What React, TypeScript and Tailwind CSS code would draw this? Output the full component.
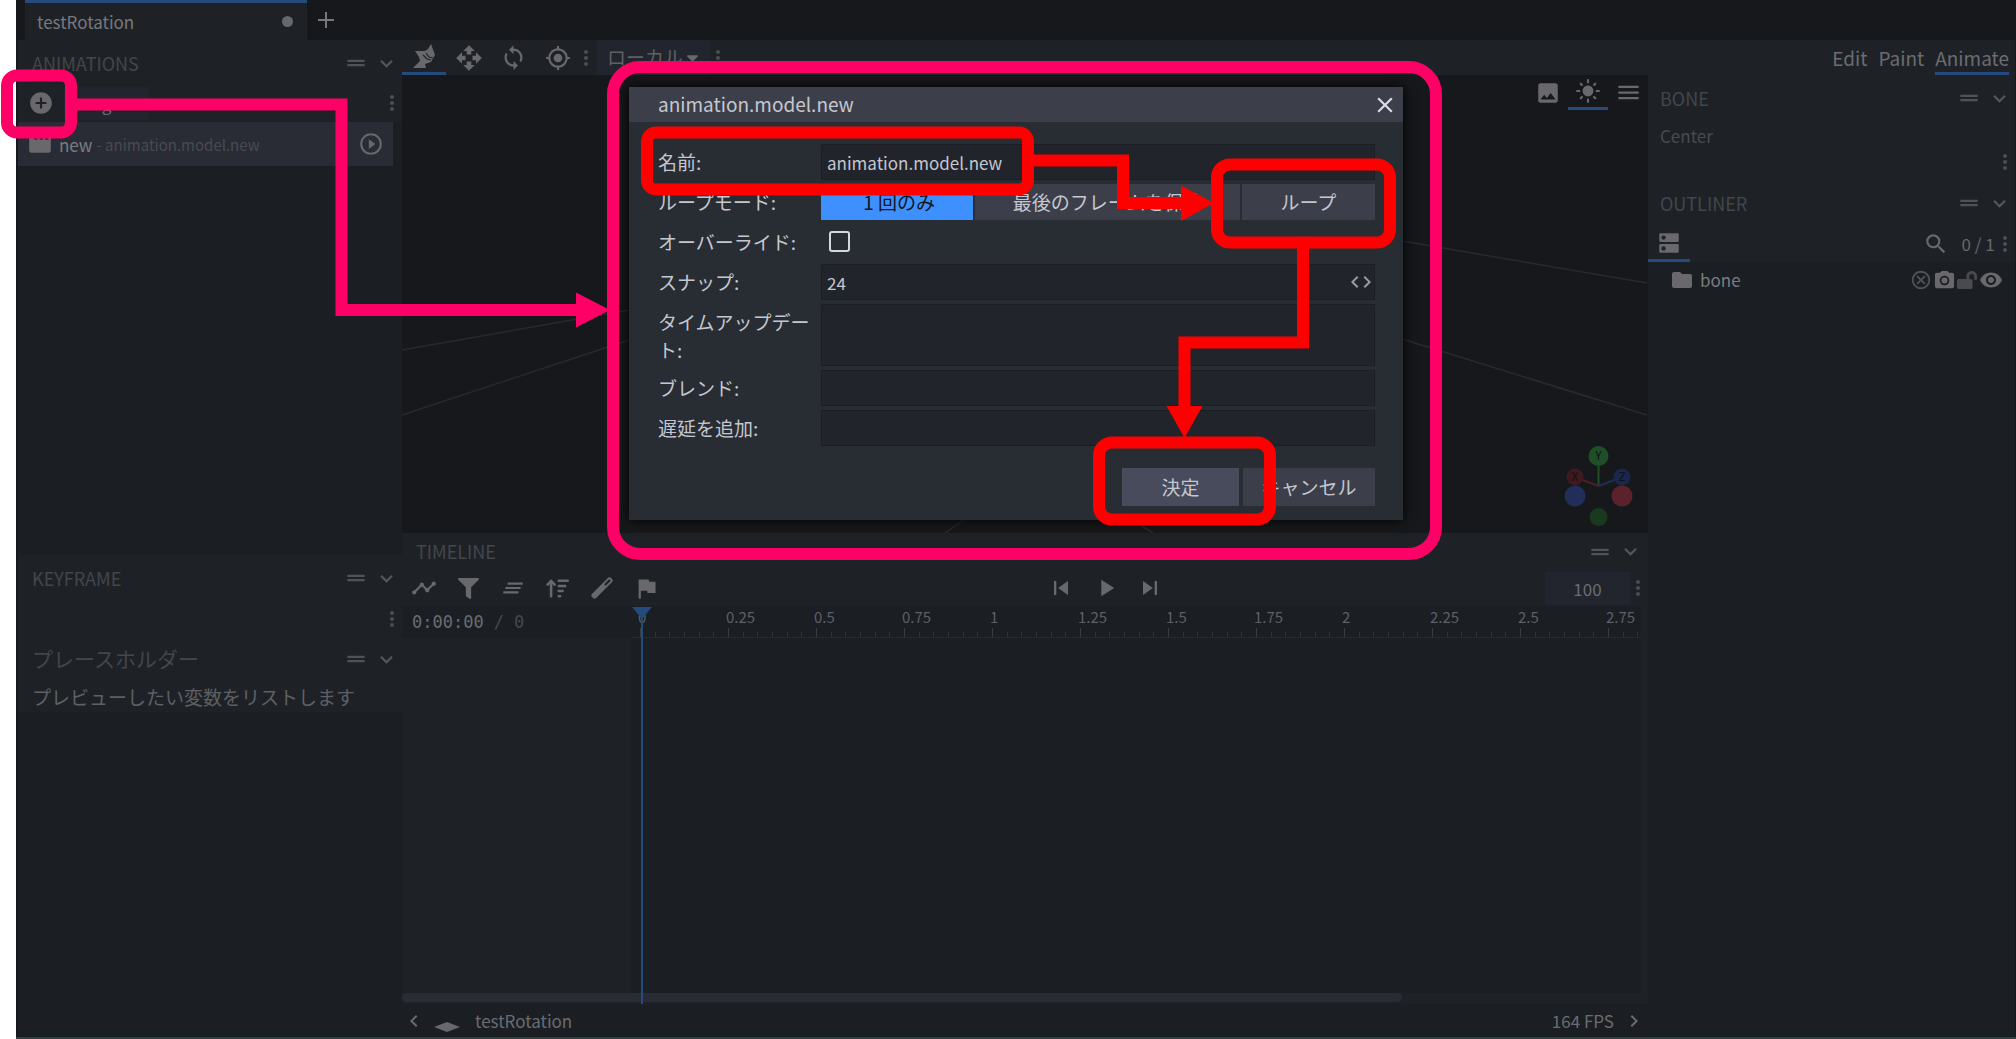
import type { ReactNode } from "react";
import {
  MdAddCircle,
  MdClearAll,
  MdClose,
  MdCode,
  MdDns,
  MdDragHandle,
  MdExpandMore,
  MdFlag,
  MdFolder,
  MdGpsFixed,
  MdImage,
  MdKeyboardArrowLeft,
  MdKeyboardArrowRight,
  MdLightMode,
  MdMenu,
  MdMoreVert,
  MdMovie,
  MdOpenWith,
  MdOutlineCancel,
  MdPhotoCamera,
  MdPlayArrow,
  MdPlayCircleOutline,
  MdSearch,
  MdSkipNext,
  MdSkipPrevious,
  MdSync,
  MdTimeline,
  MdVisibility,
} from "react-icons/md";
import { FaCaretDown, FaFilter, FaLockOpen } from "react-icons/fa";
import { FaArrowUpWideShort } from "react-icons/fa6";

const RULER = ["0", "0.25", "0.5", "0.75", "1", "1.25", "1.5", "1.75", "2", "2.25", "2.5", "2.75"];

function IconButton({ label, className = "", children }: { label: string; className?: string; children: ReactNode }) {
  return (
    <button type="button" aria-label={label} className={`flex items-center justify-center shrink-0 ${className}`}>
      {children}
    </button>
  );
}

function Dots({ className = "" }: { className?: string }) {
  return (
    <IconButton label="More" className={`w-3 text-[#4c4e53] ${className}`}>
      <MdMoreVert size={24} className="shrink-0" />
    </IconButton>
  );
}

function PanelHeader({ title, className }: { title: string; className: string }) {
  return (
    <header className={`flex items-center text-[#43464b] ${className}`}>
      <h2 className="flex-1">{title}</h2>
      <IconButton label="Move panel" className="w-8 text-[#505257]">
        <MdDragHandle size={26} />
      </IconButton>
      <IconButton label="Fold panel" className="w-7 text-[#55575c]">
        <MdExpandMore size={25} />
      </IconButton>
    </header>
  );
}

function GizmoIcon() {
  return (
    <svg width="22" height="24" viewBox="0 0 22 24" fill="currentColor">
      <path d="M18 0l4 11-4 7-6 2 1 4H0l7-7-1-4-4-6h10l3-2z" />
      <path d="m10 11 4 4 4 1M13 9l3 4 4 1" stroke="#1e2226" strokeWidth="1.2" fill="none" />
    </svg>
  );
}

function PenIcon() {
  return (
    <svg width="22" height="22" viewBox="0 0 22 22" fill="none" stroke="currentColor" strokeLinecap="round">
      <path d="M3.500 18.500 18.500 3.500" strokeWidth="6" />
      <path d="M14.500 7.500l4-4" stroke="#1e2226" strokeWidth="2" />
    </svg>
  );
}

function LeftSidebar() {
  return (
    <aside className="flex flex-col w-[384px] shrink-0 bg-[#1b1f23]">
      <section className="bg-[#1e2226]">
        <PanelHeader title="ANIMATIONS" className="h-[46px] pl-3.5 pr-0.5 text-[18px]" />
        <div className="flex items-center h-[34px] pr-1 mb-0.5">
          <IconButton label="Add animation" className="w-[46px] text-[#68686d]">
            <MdAddCircle size={26} />
          </IconButton>
          <input
            aria-label="Animation speed"
            defaultValue="g"
            className="w-[85px] h-[33px] bg-[#22252d] text-center text-[17px] text-[#6a6c72]"
          />
          <Dots className="ml-auto" />
        </div>
      </section>
      <div className="flex items-center h-11 mr-[9px] pl-[9px] bg-[#292c35] text-[#68686d]">
        <MdMovie size={26} className="shrink-0" />
        <span className="mt-0.5 ml-1.5 text-[17px] text-[#7b7c81]">new</span>
        <span className="mt-0.5 ml-1 flex-1 text-[15px] text-[#484b51]">- animation.model.new</span>
        <IconButton label="Play" className="w-11">
          <MdPlayCircleOutline size={26} />
        </IconButton>
      </div>
      <section className="mt-[389px] bg-[#1e2226]">
        <PanelHeader title="KEYFRAME" className="h-[46px] pl-3.5 pr-0.5 text-[18px]" />
        <div className="flex justify-end h-[36px] pr-1">
          <Dots />
        </div>
        <PanelHeader title="プレースホルダー" className="h-[44px] pl-3.5 pr-0.5 text-[21px]" />
        <p className="pl-3.5 pt-[3px] pb-0.5 text-[19px] leading-[26px] text-[#5e6065]">
          プレビューしたい変数をリストします
        </p>
      </section>
    </aside>
  );
}

function Viewport() {
  return (
    <div className="relative h-[458px] shrink-0 overflow-hidden bg-[#17181b]">
      <svg className="absolute inset-0" width="1246" height="458" fill="none" stroke="#292a2e" strokeWidth="1.5">
        <path d="M0 275 227 235M0 340 227 265M1000 166l245 42M1000 264l245 76M543 458l20-14M735 448l16 10" />
      </svg>
      <div className="relative flex justify-end text-[#68686d]">
        <IconButton label="Background" className="w-10 h-[35px]">
          <MdImage size={26} />
        </IconButton>
        <IconButton label="Shading" className="w-10 h-[35px] border-b-3 border-[#254a7c]">
          <MdLightMode size={26} />
        </IconButton>
        <IconButton label="Menu" className="w-10 h-[35px]">
          <MdMenu size={27} />
        </IconButton>
      </div>
      <svg className="absolute right-3.5 bottom-0" width="70" height="88" viewBox="0 0 70 88">
        <g strokeWidth="2">
          <path d="M34.500 41V11" stroke="#1f4f26" />
          <path d="M34.500 41 11 32" stroke="#4c2026" />
          <path d="M34.500 41 58 32" stroke="#1f2f54" />
        </g>
        <circle cx="34.500" cy="11" r="10" fill="#1f4f26" />
        <circle cx="11" cy="32" r="8.500" fill="#40191f" />
        <circle cx="58" cy="32" r="8.500" fill="#1a264b" />
        <circle cx="11" cy="51" r="10.500" fill="#202e59" />
        <circle cx="58" cy="51" r="10.500" fill="#5b222b" />
        <circle cx="34.500" cy="72" r="9" fill="#1a3a20" />
        <g fill="#101215" fontSize="12" textAnchor="middle">
          <text x="34.500" y="15">Y</text>
          <text x="11" y="36">X</text>
          <text x="58" y="36">Z</text>
        </g>
      </svg>
    </div>
  );
}

function Timeline() {
  return (
    <section className="flex flex-col flex-1 bg-[#1e2226]">
      <PanelHeader title="TIMELINE" className="h-[37px] pl-3.5 pr-1 text-[18px]" />
      <div className="flex items-center h-[36px] text-[#68686d]">
        <div className="flex flex-4">
          <IconButton label="Graph editor" className="w-11">
            <MdTimeline size={26} />
          </IconButton>
          <IconButton label="Filter" className="w-[45px]">
            <FaFilter size={21} />
          </IconButton>
          <IconButton label="Clear" className="w-11">
            <MdClearAll size={26} />
          </IconButton>
          <IconButton label="Sort" className="w-[45px]">
            <FaArrowUpWideShort size={23} />
          </IconButton>
          <IconButton label="Bring up" className="w-11">
            <PenIcon />
          </IconButton>
          <IconButton label="Marker" className="w-[45px]">
            <MdFlag size={27} />
          </IconButton>
        </div>
        <div className="flex pl-2">
          <IconButton label="Previous" className="w-11">
            <MdSkipPrevious size={28} />
          </IconButton>
          <IconButton label="Play" className="w-[45px]">
            <MdPlayArrow size={28} />
          </IconButton>
          <IconButton label="Next" className="w-11">
            <MdSkipNext size={28} />
          </IconButton>
        </div>
        <div className="flex flex-3 items-center justify-end pr-1">
          <input
            aria-label="Playback speed"
            defaultValue="100"
            className="w-[85px] h-[33px] mr-0.5 bg-[#22252d] text-center text-[17px] text-[#6a6c72]"
          />
          <Dots />
        </div>
      </div>
      <div className="relative flex flex-1">
        <div className="w-[229px] shrink-0">
          <div className="flex items-center h-8 pt-0.5 pl-2.5 gap-2.5 bg-[#1b1f23] font-['DejaVu_Sans_Mono',monospace] text-[17px] text-[#45484d]">
            <span className="text-[#6a6c72]">0:00:00</span>
            <span>/</span>
            <span>0</span>
          </div>
        </div>
        <div className="flex-1 min-w-0 mr-[7px] bg-[#1b1e22]">
          <div className="flex h-8 pl-[9px] overflow-hidden border-b border-[#292b2f]">
            {RULER.map((t) => (
              <div key={t} className="flex flex-col w-[88px] shrink-0">
                <span className="h-[22px] -ml-0.5 text-[15px] leading-[22px] text-[#5e6065]">{t}</span>
                <div className="flex items-end h-[9px]">
                  <i className="flex-1 h-[9px] border-l border-[#3a3c40]" />
                  {[1, 2, 3, 4, 5].map((n) => (
                    <i key={n} className="flex-1 h-[5px] border-l border-[#303236]" />
                  ))}
                </div>
              </div>
            ))}
          </div>
        </div>
        {/* playhead */}
        <svg className="absolute left-[230px] top-px" width="20" height="12">
          <path d="M0 0h20L10 12z" fill="#254a7c" />
        </svg>
        <div className="absolute left-[239px] top-1 -bottom-[11px] w-0.5 z-10 bg-[#254a7c]" />
      </div>
      <div className="h-[11px] pb-0.5">
        <div className="w-[1000px] max-w-full h-[9px] rounded-full bg-[#292c35]" />
      </div>
      <footer className="flex items-center h-[33px] bg-[#1b1e22] text-[17px] leading-[24px] text-[#6a6c72]">
        <IconButton label="Back" className="w-6">
          <MdKeyboardArrowLeft size={24} />
        </IconButton>
        <svg className="ml-2 mt-3" width="26" height="10" fill="#68686d">
          <path d="M0 5 13 0l13 5-13 5z" />
        </svg>
        <span className="ml-[15px] flex-1">testRotation</span>
        <span>164 FPS</span>
        <IconButton label="Forward" className="w-7 ml-1.5">
          <MdKeyboardArrowRight size={24} />
        </IconButton>
      </footer>
    </section>
  );
}

function RightSidebar() {
  return (
    <aside className="w-[367px] shrink-0 bg-[#1b1e22]">
      <section className="bg-[#1e2226] text-[#68686d]">
        <PanelHeader title="BONE" className="h-[46px] pl-3 pr-0.5 text-[18px]" />
        <p className="pl-3 h-[30px] text-[17px] leading-[30px] text-[#484b51]">Center</p>
        <div className="flex justify-end h-[22px] mb-[7px] pr-1">
          <Dots />
        </div>
        <PanelHeader title="OUTLINER" className="h-[46px] pl-3 pr-0.5 text-[18px]" />
        <div className="flex items-center h-[36px] pr-1">
          <IconButton label="Toggle options" className="w-[42px] h-[36px] border-b-3 border-[#254a7c]">
            <MdDns size={26} />
          </IconButton>
          <IconButton label="Search" className="ml-auto w-[42px]">
            <MdSearch size={26} />
          </IconButton>
          <span className="w-[42px] text-center text-[17px] whitespace-nowrap">0 / 1</span>
          <Dots />
        </div>
      </section>
      <div className="flex items-center h-[36px] pl-[22px] pr-3 text-[#68686d]">
        <MdFolder size={24} />
        <span className="ml-1.5 flex-1 text-[17px] text-[#7b7c81]">bone</span>
        <MdOutlineCancel size={22} className="text-[#505257]" />
        <MdPhotoCamera size={23} className="ml-px" />
        <FaLockOpen size={20} className="ml-px text-[#484a4f]" />
        <MdVisibility size={24} className="ml-0.5" />
      </div>
    </aside>
  );
}

function Row({ id, label, tall = false, children }: { id?: string; label: string; tall?: boolean; children: ReactNode }) {
  return (
    <div className="flex">
      <label htmlFor={id} className={`w-[163px] shrink-0 text-[19px] ${tall ? "pt-1 leading-[28px]" : "leading-[36px]"}`}>
        {label}
      </label>
      <div className="relative flex-1">{children}</div>
    </div>
  );
}

const FIELD = "block w-full h-[36px] px-[5px] bg-[#21242b] border border-[#1c1e24] text-[17px]";

function AnimationDialog() {
  return (
    <div
      role="dialog"
      aria-label="animation.model.new"
      className="absolute left-1/2 top-[87px] -translate-x-1/2 w-[774px] bg-[#282c33] text-[#c5c7d0] shadow-[0_0_12px_#000]"
    >
      <header className="flex items-center h-[35px] pl-[29px] bg-[#3c3f4a]">
        <h1 className="flex-1 pb-0.5 text-[19px] leading-[33px]">animation.model.new</h1>
        <IconButton label="Close" className="w-9 text-[#dcdee6]">
          <MdClose size={26} />
        </IconButton>
      </header>
      <form className="flex flex-col gap-1 pt-[22px] pl-[29px] pr-[28px] pb-[14px]">
        <Row id="name" label="名前:">
          <input id="name" defaultValue="animation.model.new" className={FIELD} />
        </Row>
        <Row label="ループモード:">
          <div className="grid grid-cols-[152fr_264fr_133fr] gap-0.5 h-[36px] text-[19px]">
            <button type="button" className="pl-1 bg-[#3e90ff] text-[#10151d]">
              1 回のみ
            </button>
            <button type="button" className="bg-[#3c3f4a]">
              最後のフレームを保持
            </button>
            <button type="button" className="bg-[#3c3f4a]">
              ループ
            </button>
          </div>
        </Row>
        <Row id="override" label="オーバーライド:">
          <input
            id="override"
            type="checkbox"
            className="appearance-none block mt-[7px] ml-2 size-[21px] rounded-[3px] border-2 border-[#d5d7e0]"
          />
        </Row>
        <Row id="snap" label="スナップ:">
          <input id="snap" defaultValue="24" className={FIELD} />
          <MdCode size={24} className="absolute right-0.5 top-1.5 text-[#9a9ca4]" />
        </Row>
        <Row id="update" label="タイムアップデート:" tall>
          <textarea id="update" className="block w-full h-[62px] resize-none bg-[#21242b] border border-[#1c1e24]" />
        </Row>
        <Row id="blend" label="ブレンド:">
          <input id="blend" className={FIELD} />
        </Row>
        <Row id="delay" label="遅延を追加:">
          <input id="delay" className={FIELD} />
        </Row>
        <div className="flex justify-end gap-1 mt-[18px] text-[19px]">
          <button type="button" className="w-[117px] h-[38px] bg-[#474b5b]">
            決定
          </button>
          <button type="button" className="w-[132px] h-[38px] bg-[#3c3f4a]">
            キャンセル
          </button>
        </div>
      </form>
    </div>
  );
}

// Guide marks drawn over the editor: pink opens the dialog, red walks through it
function Guide() {
  return (
    <svg
      className="absolute left-0 top-0 z-20 pointer-events-none overflow-visible"
      width="1450"
      height="570"
      fill="none"
      strokeWidth="12"
    >
      <g stroke="#ff0066">
        <rect x="7" y="75.500" width="64" height="57" rx="10" />
        <rect x="613" y="67" width="823" height="487" rx="27" />
        <path d="M77 104.500H341.500V310H578" />
      </g>
      <path d="M576 292.500 610 310l-34 17.500z" fill="#ff0066" />
      <g stroke="#ff0000">
        <rect x="647" y="132.500" width="381" height="57" rx="9" />
        <path d="M1034 160.500H1123V203H1184" />
        <rect x="1217" y="164.500" width="173" height="78" rx="13" />
        <path d="M1303 248V342.500H1184.500V408" />
        <rect x="1099" y="442.500" width="171" height="77" rx="13" />
      </g>
      <path d="M1181 185.500 1214 203l-33 18zM1166.500 406h36l-18 32z" fill="#ff0000" />
    </svg>
  );
}

export default function App() {
  return (
    <div className="relative flex flex-col min-h-screen pl-4 bg-white font-['Noto_Sans_CJK_JP',sans-serif]">
      <div className="relative flex flex-col flex-1 bg-[#17181b] border-b-2 border-[#33403f] pl-0.5 pr-px">
        <nav className="flex h-10 pl-[7px] text-[#77797e]">
          <div className="flex items-center w-[282px] pl-3 pr-2 bg-[#1e2226] border-t-3 border-[#254a7c]">
            <span className="flex-1 text-[17px]">testRotation</span>
            <IconButton label="Unsaved" className="size-6">
              <span className="size-[11px] rounded-full bg-[#68686d]" />
            </IconButton>
          </div>
          <IconButton label="New tab" className="w-[37px]">
            <svg width="16" height="16" stroke="currentColor" strokeWidth="2">
              <path d="M0 8h16M8 0v16" />
            </svg>
          </IconButton>
        </nav>
        <div className="flex flex-1">
          <LeftSidebar />
          <div className="flex flex-col flex-1 min-w-0">
            <div className="flex">
              <div className="flex flex-1 min-w-0 h-[35px] bg-[#1e2226] text-[#68686d]">
                <IconButton label="Transform" className="w-11 border-b-3 border-[#254a7c]">
                  <GizmoIcon />
                </IconButton>
                <IconButton label="Move" className="w-[45px]">
                  <MdOpenWith size={28} />
                </IconButton>
                <IconButton label="Rotate" className="w-11">
                  <MdSync size={27} />
                </IconButton>
                <IconButton label="Pivot" className="w-[45px]">
                  <MdGpsFixed size={26} />
                </IconButton>
                <Dots />
                <div className="relative ml-[5px] w-[113px] bg-[#22252d]">
                  <select
                    aria-label="Space"
                    className="appearance-none w-full h-full pl-2.5 text-[19px] text-[#5e6065]"
                  >
                    <option>ローカル</option>
                  </select>
                  <FaCaretDown size={19} className="absolute right-2 top-2" />
                </div>
                <Dots className="ml-0.5" />
              </div>
              <div className="flex justify-end gap-[11px] w-[367px] pr-1.5 bg-[#1e2226] text-[19px] leading-[28px] text-[#6a6c72]">
                <button type="button">Edit</button>
                <button type="button">Paint</button>
                <button type="button" className="pt-[3px] border-b-3 border-[#254a7c]">
                  Animate
                </button>
              </div>
            </div>
            <div className="flex flex-1">
              <div className="flex flex-col flex-1 min-w-0">
                <Viewport />
                <Timeline />
              </div>
              <RightSidebar />
            </div>
          </div>
        </div>
        <AnimationDialog />
      </div>
      <Guide />
    </div>
  );
}
